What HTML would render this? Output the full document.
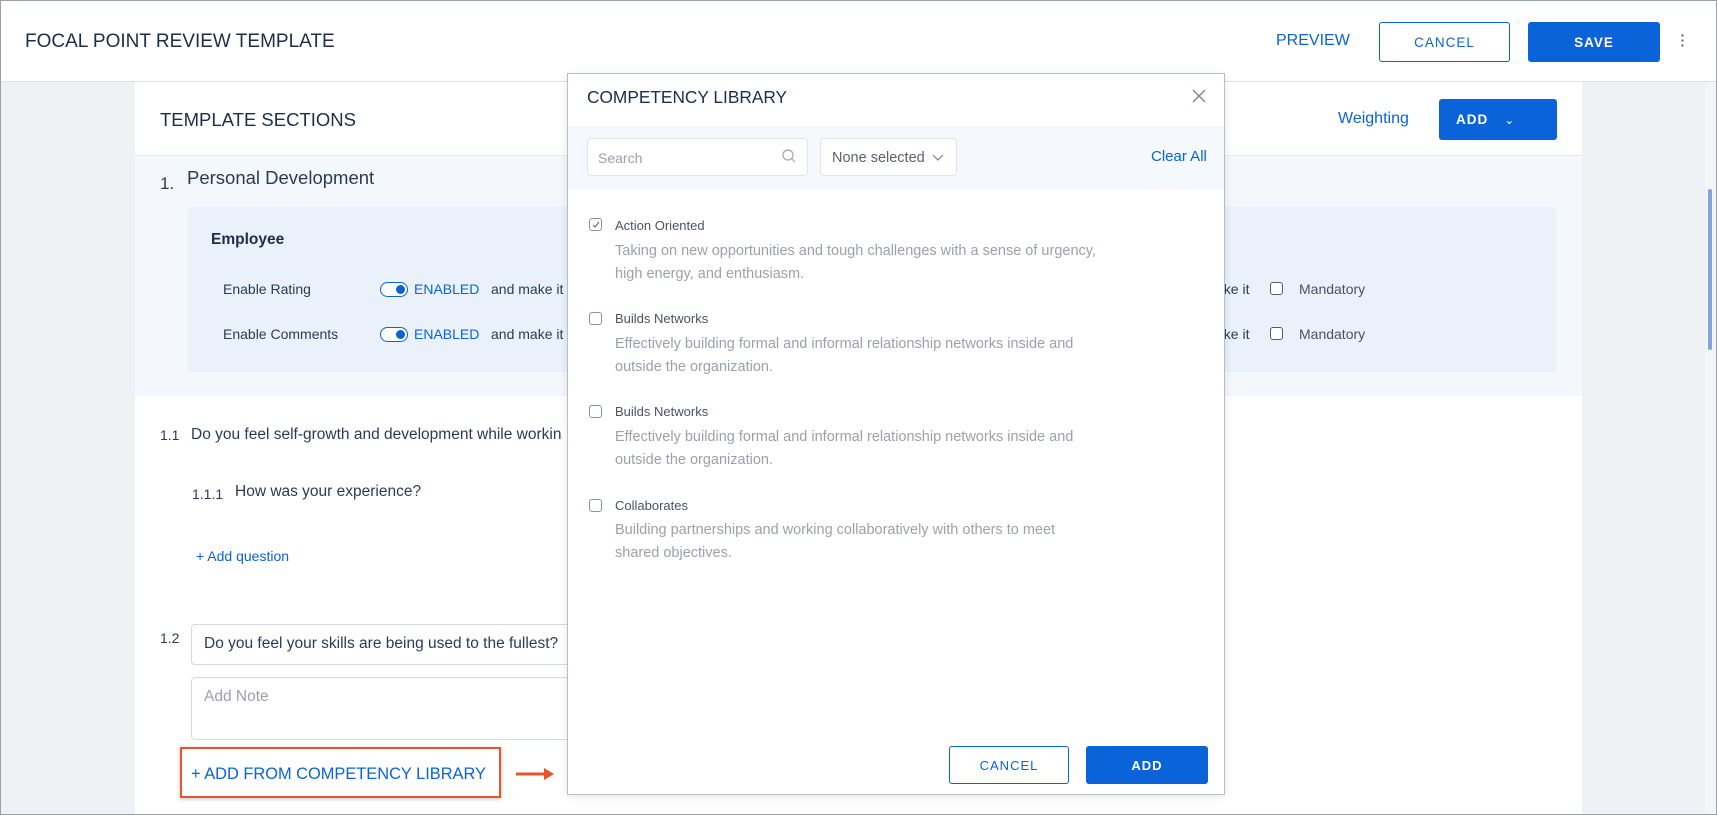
<!DOCTYPE html>
<html><head><meta charset="utf-8"><style>
*{box-sizing:border-box;margin:0;padding:0}
body{width:1717px;height:815px;overflow:hidden;background:#eff1f4;font-family:"Liberation Sans",sans-serif;color:#2b3a55;position:relative}
.a{position:absolute;white-space:nowrap}
.frame{position:absolute;left:0;top:0;width:1717px;height:815px;border:1px solid #9aa0a8;pointer-events:none}
.hdr{position:absolute;left:0;top:0;width:1717px;height:82px;background:#fff;border-bottom:1px solid #dde2e8}
.btn{position:absolute;border-radius:3px;font-size:13.5px;letter-spacing:1px;display:flex;align-items:center;justify-content:center}
.blue{background:#0a63d8;color:#fff;font-weight:bold}
.out{border:1px solid #0a63d8;color:#0a63d8;background:#fff}
.card{position:absolute;left:135px;top:82px;width:1447px;height:733px;background:#fff}
.tog{position:absolute;width:28px;height:15px;border:1.5px solid #0a63d8;border-radius:8px;background:#fff}
.tog:after{content:"";position:absolute;right:2px;top:2px;width:9px;height:9px;border-radius:50%;background:#0a63d8}
.cb{position:absolute;width:13px;height:13px;border:1.5px solid #555d69;border-radius:3px;background:#fff}
.mcb{position:absolute;width:13px;height:13px;border:1.3px solid #8a929e;border-radius:3px;background:#fff}
.d{font-size:14.5px;color:#9aa1ab}
.it{font-size:13px;color:#4a5364}
</style></head><body>
<div class="hdr"></div>
<div class="a" style="left:25px;top:31px;font-size:19px;color:#1e2d4a">FOCAL POINT REVIEW TEMPLATE</div>
<div class="a" style="left:1276px;top:32px;font-size:16px;color:#0a63d8">PREVIEW</div>
<div class="btn out" style="left:1379px;top:22px;width:131px;height:40px">CANCEL</div>
<div class="btn blue" style="left:1528px;top:22px;width:132px;height:40px">SAVE</div>
<div class="a" style="left:1681px;top:33px;width:3px;height:14px;background:radial-gradient(circle,#5a6270 1px,transparent 1.3px) 0 0/3px 5px"></div>
<div style="position:absolute;left:1706px;top:82px;width:10px;height:733px;background:#f4f5f7"></div>
<div style="position:absolute;left:1708px;top:189px;width:4px;height:161px;border-radius:2px;background:#7fa5d9"></div>

<div class="card"></div>
<div class="a" style="left:160px;top:109px;font-size:18.5px;color:#1e2d4a">TEMPLATE SECTIONS</div>
<div class="a" style="left:1338px;top:110px;font-size:16px;color:#0a63d8">Weighting</div>
<div class="btn blue" style="left:1439px;top:99px;width:118px;height:41px;justify-content:flex-start;padding-left:17px">ADD <span style="margin-left:16px;font-weight:normal;font-size:12px">&#8964;</span></div>
<div style="position:absolute;left:135px;top:155px;width:1447px;height:241px;background:#f4f7fb;border-top:1px solid #e3e8ef"></div>
<div class="a" style="left:160px;top:174px;font-size:17px">1.</div>
<div class="a" style="left:187px;top:167px;font-size:18.5px">Personal Development</div>
<div style="position:absolute;left:187px;top:207px;width:1370px;height:165px;background:#eaf1fb;border-radius:6px"></div>
<div class="a" style="left:211px;top:231px;font-size:15.5px;font-weight:bold;color:#1e2d4a">Employee</div>
<div class="a" style="left:223px;top:281px;font-size:14px">Enable Rating</div>
<div class="tog" style="left:380px;top:282px"></div>
<div class="a" style="left:414px;top:281px;font-size:14px;color:#0a63d8">ENABLED</div>
<div class="a" style="left:491px;top:281px;font-size:14px">and make it</div>
<div class="a" style="left:223px;top:326px;font-size:14px">Enable Comments</div>
<div class="tog" style="left:380px;top:327px"></div>
<div class="a" style="left:414px;top:326px;font-size:14px;color:#0a63d8">ENABLED</div>
<div class="a" style="left:491px;top:326px;font-size:14px">and make it</div>
<div class="a" style="left:1216px;top:281px;font-size:14px">ake it</div>
<div class="cb" style="left:1270px;top:282px"></div>
<div class="a" style="left:1299px;top:281px;font-size:14px;color:#4a5364">Mandatory</div>
<div class="a" style="left:1216px;top:326px;font-size:14px">ake it</div>
<div class="cb" style="left:1270px;top:327px"></div>
<div class="a" style="left:1299px;top:326px;font-size:14px;color:#4a5364">Mandatory</div>

<div class="a" style="left:160px;top:427px;font-size:14px">1.1</div>
<div class="a" style="left:191px;top:426px;font-size:15.5px">Do you feel self-growth and development while workin</div>
<div class="a" style="left:192px;top:486px;font-size:14px">1.1.1</div>
<div class="a" style="left:235px;top:483px;font-size:15.5px">How was your experience?</div>
<div class="a" style="left:196px;top:548px;font-size:14px;color:#0a63d8">+ Add question</div>
<div class="a" style="left:160px;top:630px;font-size:14px">1.2</div>
<div style="position:absolute;left:191px;top:624px;width:400px;height:41px;border:1px solid #d6dbe2;border-radius:4px"></div>
<div class="a" style="left:204px;top:635px;font-size:15.5px">Do you feel your skills are being used to the fullest?</div>
<div style="position:absolute;left:191px;top:677px;width:400px;height:63px;border:1px solid #d6dbe2;border-radius:4px"></div>
<div class="a" style="left:204px;top:688px;font-size:15.5px;color:#9aa1ab">Add Note</div>
<div style="position:absolute;left:180px;top:747px;width:321px;height:51px;border:2px solid #e8542b;box-shadow:0 1px 4px rgba(0,0,0,.25)"></div>
<div class="a" style="left:191px;top:765px;font-size:16.4px;color:#0a63d8">+ ADD FROM COMPETENCY LIBRARY</div>
<svg class="a" style="left:514px;top:766px" width="42" height="16"><path d="M2 8H32" stroke="#e8542b" stroke-width="3"/><path d="M30 2L40 8L30 14Z" fill="#e8542b"/></svg>

<div style="position:absolute;left:567px;top:73px;width:658px;height:722px;background:#fff;border:1px solid #b8bec6;box-shadow:0 2px 8px rgba(0,0,0,.1)"></div>
<div class="a" style="left:587px;top:87px;font-size:17.3px;color:#1e2d4a">COMPETENCY LIBRARY</div>
<svg class="a" style="left:1192px;top:89px" width="14" height="14"><path d="M1 1L13 13M13 1L1 13" stroke="#7a828e" stroke-width="1.3"/></svg>
<div style="position:absolute;left:568px;top:126px;width:656px;height:64px;background:#f5f8fc"></div>
<div style="position:absolute;left:587px;top:138px;width:221px;height:38px;background:#fff;border:1px solid #e0e4ea;border-radius:4px"></div>
<div class="a" style="left:598px;top:150px;font-size:14px;color:#9aa1ab">Search</div>
<svg class="a" style="left:781px;top:148px" width="16" height="16"><circle cx="7" cy="7" r="5" fill="none" stroke="#a0a6b0" stroke-width="1.2"/><path d="M10.5 10.5L14 14" stroke="#a0a6b0" stroke-width="1.2"/></svg>
<div style="position:absolute;left:820px;top:138px;width:137px;height:38px;background:#fff;border:1px solid #e0e4ea;border-radius:4px"></div>
<div class="a" style="left:832px;top:150px;font-size:14.5px;color:#5a6270">None selected</div>
<svg class="a" style="left:932px;top:154px" width="12" height="8"><path d="M1 1L6 6L11 1" fill="none" stroke="#7a828e" stroke-width="1.2"/></svg>
<div class="a" style="left:1151px;top:148px;font-size:15px;color:#0a63d8">Clear All</div>

<div class="mcb" style="left:589px;top:218px"></div>
<svg class="a" style="left:591px;top:220px" width="10" height="10"><path d="M2 5L4 7L8 2" fill="none" stroke="#6a7280" stroke-width="1.2"/></svg>
<div class="a it" style="left:615px;top:218px">Action Oriented</div>
<div class="a d" style="left:615px;top:243px">Taking on new opportunities and tough challenges with a sense of urgency,</div>
<div class="a d" style="left:615px;top:266px">high energy, and enthusiasm.</div>
<div class="mcb" style="left:589px;top:312px"></div>
<div class="a it" style="left:615px;top:311px">Builds Networks</div>
<div class="a d" style="left:615px;top:336px">Effectively building formal and informal relationship networks inside and</div>
<div class="a d" style="left:615px;top:359px">outside the organization.</div>
<div class="mcb" style="left:589px;top:405px"></div>
<div class="a it" style="left:615px;top:404px">Builds Networks</div>
<div class="a d" style="left:615px;top:429px">Effectively building formal and informal relationship networks inside and</div>
<div class="a d" style="left:615px;top:452px">outside the organization.</div>
<div class="mcb" style="left:589px;top:499px"></div>
<div class="a it" style="left:615px;top:498px">Collaborates</div>
<div class="a d" style="left:615px;top:522px">Building partnerships and working collaboratively with others to meet</div>
<div class="a d" style="left:615px;top:545px">shared objectives.</div>

<div class="btn out" style="left:949px;top:746px;width:120px;height:38px;font-size:13px">CANCEL</div>
<div class="btn blue" style="left:1086px;top:746px;width:122px;height:38px;font-size:13px">ADD</div>
<div class="frame"></div>
</body></html>
